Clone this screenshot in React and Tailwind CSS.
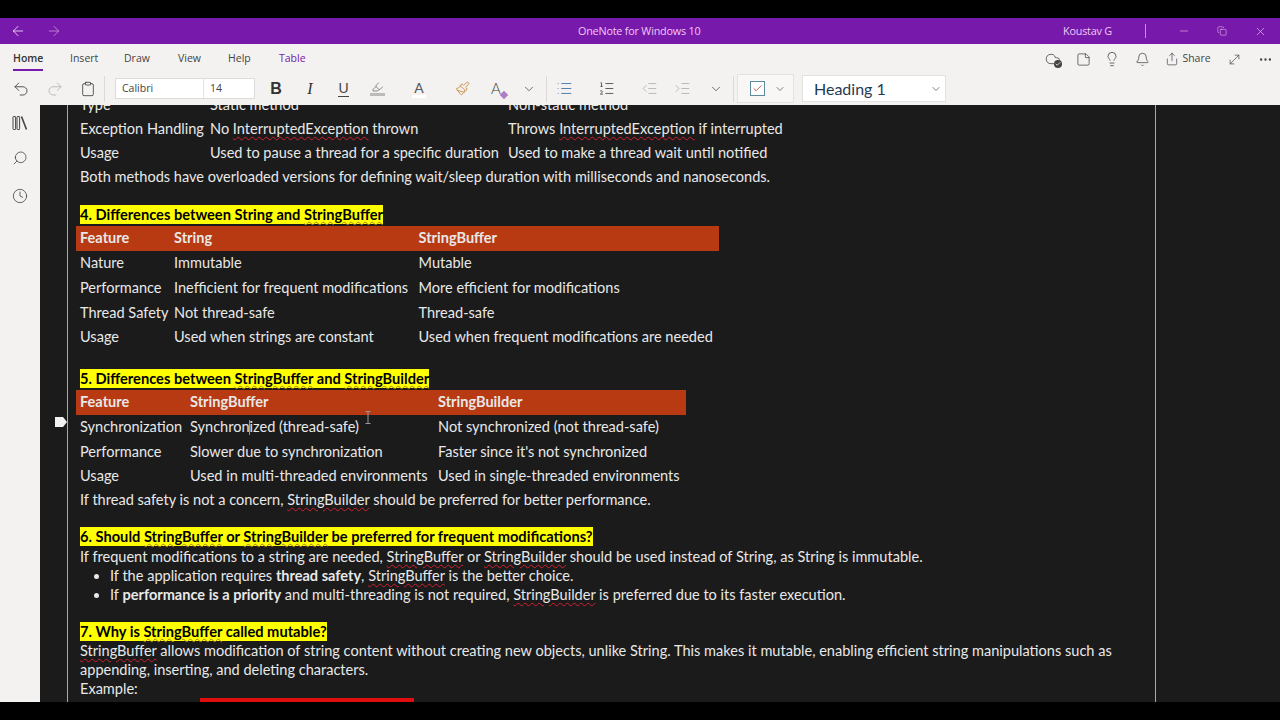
import React from 'react';
import {
  Undo2, Redo2, Clipboard, Highlighter, Paintbrush, ChevronDown, List, ListOrdered, IndentDecrease, IndentIncrease,
  Search, Clock, StickyNote, Lightbulb, Bell, Share, MoveDiagonal, Ellipsis, ArrowLeft, ArrowRight, Minus, X, Copy, Check, Cloud,
} from 'lucide-react';

function Sq({ children, warm }) {
  return <span className={warm ? 'underline decoration-wavy decoration-1 decoration-[#a8801a] underline-offset-1' : 'underline decoration-wavy decoration-1 decoration-[#d02030] underline-offset-2'}>{children}</span>;
}

function Line({ children, className = '' }) {
  return <div className={`h-[19px] leading-[19px] whitespace-pre ${className}`}>{children}</div>;
}

function Heading({ children, className = '' }) {
  return (
    <div className={`h-[19px] leading-[19px] ${className}`}>
      <span className="inline-block h-[19px] bg-[#ffff00] text-[14.65px] font-bold text-black">{children}</span>
    </div>
  );
}

function TableRow({ cols, cells, head, className = '' }) {
  return (
    <div className={`flex h-[24.7px] items-center whitespace-pre ${head ? 'bg-[#b83a12] font-bold -ml-[4px] pl-[4px]' : ''} ${className}`}>
      {cells.map((c, i) => (
        <div key={i} className={cols[i]}>{c}</div>
      ))}
    </div>
  );
}

function Tool({ w, children }) {
  return <div className={`flex h-[29px] items-center justify-center ${w}`}>{children}</div>;
}

function Sep() {
  return <div className="h-[26px] w-px bg-[#dcdad8]" />;
}

const cols3 = ['w-[130px]', 'w-[298px]', 'w-[400px]'];
const cols4 = ['w-[94px]', 'w-[244.5px]', 'w-[300px]'];
const cols5 = ['w-[110px]', 'w-[248px]', 'w-[244px]'];

export default function App() {
  return (
    <div className="flex h-[720px] w-[1280px] flex-col overflow-hidden bg-black font-['Lato',sans-serif]">
      <div className="h-[18px] shrink-0 bg-black" />

      {/* title bar */}
      <div className="flex h-[26px] shrink-0 items-center bg-[#7719aa] text-[#f0c8f4]">
        <div className="flex w-[72px] items-center">
          <div className="flex w-[36px] justify-center"><ArrowLeft size={16} strokeWidth={1.3} className="text-[#f4dcf8]" /></div>
          <div className="flex w-[36px] justify-center"><ArrowRight size={16} strokeWidth={1.3} className="text-[#c98ade]" /></div>
        </div>
        <div className="w-[991px] pl-[506px] text-[10.8px] font-['Open_Sans',sans-serif] tracking-[-0.2px]">OneNote for Windows 10</div>
        <div className="w-[82px] text-[10.8px] font-['Open_Sans',sans-serif] tracking-[-0.2px]">Koustav G</div>
        <div className="h-[14px] w-px bg-[#c58fe0]" />
        <div className="ml-[19px] flex items-center">
          <div className="flex w-[38px] justify-center"><Minus size={12} strokeWidth={1.2} /></div>
          <div className="flex w-[38px] justify-center"><Copy size={10} strokeWidth={1.3} /></div>
          <div className="flex w-[38px] justify-center"><X size={13} strokeWidth={1.2} /></div>
        </div>
      </div>

      {/* ribbon */}
      <div className="h-[61px] shrink-0 bg-[#f3f2f1] text-[#444]">
        <div className="flex h-[30px] items-start pt-[7px] text-[10.5px] font-['Open_Sans',sans-serif]">
          <div className="ml-[13px] w-[57px]">
            <div className="h-[15px] leading-[15px] font-semibold text-[#333]">Home</div>
            <div className="mt-[3px] h-[2px] w-[30px] bg-[#7719aa]" />
          </div>
          <div className="w-[54px] leading-[15px]">Insert</div>
          <div className="w-[54px] leading-[15px]">Draw</div>
          <div className="w-[50px] leading-[15px]">View</div>
          <div className="w-[51px] leading-[15px]">Help</div>
          <div className="leading-[15px] text-[#7719aa]">Table</div>
          <div className="ml-auto flex items-center text-[#444]">
            <div className="relative flex w-[32px] justify-center">
              <Cloud size={16} strokeWidth={1.2} />
              <span className="absolute bottom-[-1px] right-[7px] flex h-[8px] w-[8px] items-center justify-center rounded-full bg-[#444]"><Check size={6} strokeWidth={3} className="text-white" /></span>
            </div>
            <div className="flex w-[28px] justify-center"><StickyNote size={15} strokeWidth={1.2} /></div>
            <div className="flex w-[30px] justify-center"><Lightbulb size={16} strokeWidth={1.2} /></div>
            <div className="flex w-[30px] justify-center"><Bell size={15} strokeWidth={1.2} /></div>
            <div className="flex w-[62px] items-center justify-center gap-[3px]"><Share size={14} strokeWidth={1.2} /><span>Share</span></div>
            <div className="flex w-[31px] justify-center"><MoveDiagonal size={15} strokeWidth={1.1} /></div>
            <div className="flex w-[30px] justify-center"><Ellipsis size={15} strokeWidth={1.8} /></div>
          </div>
        </div>
        <div className="flex h-[29px] items-center pl-[4px]">
          <Tool w="w-[34px]"><Undo2 size={18} strokeWidth={1.2} className="text-[#444]" /></Tool>
          <Tool w="w-[34px]"><Redo2 size={18} strokeWidth={1.2} className="text-[#b5b5b5]" /></Tool>
          <Tool w="w-[32px]"><Clipboard size={16} strokeWidth={1.3} className="text-[#444]" /></Tool>
          <Sep />
          <div className="ml-[10px] flex h-[21px] w-[140px] border border-[#dedcda] bg-white text-[10.5px] leading-[19px] text-[#444] font-['Open_Sans',sans-serif]">
            <div className="w-[88px] border-r border-[#e4e2e0] pl-[6px]">Calibri</div>
            <div className="pl-[6px]">14</div>
          </div>
          <div className="ml-[4px] flex items-center">
            <Tool w="w-[34px]"><span className="font-['Liberation_Sans',sans-serif] text-[16px] font-bold text-[#333]">B</span></Tool>
            <Tool w="w-[34px]"><span className="font-['Liberation_Serif',serif] text-[16px] italic text-[#333]">I</span></Tool>
            <Tool w="w-[33px]"><span className="border-b border-[#444] font-['Liberation_Sans',sans-serif] text-[14px] leading-[15px] text-[#444]">U</span></Tool>
            <Tool w="w-[34px]"><Highlighter size={15} strokeWidth={1.2} className="border-b-[3px] border-[#bbb] text-[#444]" /></Tool>
            <Tool w="w-[50px]"><span className="border-b-[3px] border-white px-[2px] text-[14px] leading-[15px] text-[#555]">A</span></Tool>
            <Tool w="w-[36px]"><Paintbrush size={15} strokeWidth={1.4} className="text-[#c8893a]" /></Tool>
            <Tool w="w-[32px]">
              <span className="relative text-[15px] font-light text-[#444]">A<span className="absolute bottom-[2px] right-[-6px] h-[6px] w-[6px] rotate-45 bg-[#b07cc6]" /></span>
            </Tool>
            <Tool w="w-[34px]"><ChevronDown size={14} strokeWidth={1.3} className="text-[#444]" /></Tool>
          </div>
          <Sep />
          <Tool w="w-[35px]"><List size={17} strokeWidth={1.2} className="text-[#3a6ea5]" /></Tool>
          <Tool w="w-[49px]"><ListOrdered size={17} strokeWidth={1.2} className="text-[#444]" /></Tool>
          <Tool w="w-[36px]"><IndentDecrease size={17} strokeWidth={1.1} className="text-[#aaa]" /></Tool>
          <Tool w="w-[31px]"><IndentIncrease size={17} strokeWidth={1.1} className="text-[#aaa]" /></Tool>
          <Tool w="w-[35px]"><ChevronDown size={14} strokeWidth={1.3} className="text-[#444]" /></Tool>
          <Sep />
          <div className="ml-[3px] flex h-[29px] w-[57px] items-center border border-[#e4e2e0] bg-[#f8f7f6]">
            <div className="ml-[12px] flex h-[15px] w-[15px] items-center justify-center border border-[#5f8c9c] bg-white"><Check size={11} strokeWidth={1.6} className="text-[#b3202c]" /></div>
            <ChevronDown size={12} strokeWidth={1.4} className="ml-[9px] text-[#444]" />
          </div>
          <div className="ml-[8px] flex h-[27px] w-[144px] items-center justify-between border border-[#e4e2e0] bg-white pl-[11px] pr-[3px] text-[16px] text-[#1f3b53]">
            <span>Heading 1</span>
            <ChevronDown size={12} strokeWidth={1.4} className="text-[#444]" />
          </div>
        </div>
      </div>

      <div className="flex min-h-0 flex-1">
        {/* left rail */}
        <div className="flex w-[40px] shrink-0 flex-col items-center gap-[19px] bg-[#f3f2f1] pt-[10px] text-[#444]">
          <svg width="16" height="16" viewBox="0 0 16 16" fill="none" stroke="currentColor" strokeWidth="1">
            <rect x="1" y="1.5" width="2.6" height="13" rx="0.6" />
            <rect x="5" y="1.5" width="2.6" height="13" rx="0.6" />
            <path d="M9.5 1.5l5 13" strokeWidth="1.6" />
          </svg>
          <Search size={16} strokeWidth={1.2} className="-scale-x-100" />
          <Clock size={16} strokeWidth={1.2} className="mt-[3px]" />
        </div>

        {/* page */}
        <div className="relative min-w-0 flex-1 overflow-hidden bg-[#1b1b1b] text-[14.55px] text-[#e8e8e8]">
          <div className="ml-[27px] h-[640px] w-[1089px] border-x border-[#a8a8a8] pl-[12px] -mt-[12px]">
            <TableRow cols={cols3} cells={['Type', 'Static method', 'Non-static method']} className="!h-[24px]" />
            <TableRow cols={cols3} cells={['Exception Handling', <>No <Sq>InterruptedException</Sq> thrown</>, <>Throws <Sq>InterruptedException</Sq> if interrupted</>]} className="!h-[24px]" />
            <TableRow cols={cols3} cells={['Usage', 'Used to pause a thread for a specific duration', 'Used to make a thread wait until notified']} className="!h-[24px]" />
            <TableRow cols={['w-[800px]']} cells={['Both methods have overloaded versions for defining wait/sleep duration with milliseconds and nanoseconds.']} className="!h-[24px]" />

            <Heading className="mt-[16px]">4. Differences between String and <Sq warm>StringBuffer</Sq></Heading>
            <div className="mt-[2px] w-[639px]">
              <TableRow head cols={cols4} cells={['Feature', 'String', 'StringBuffer']} />
            </div>
            <TableRow cols={cols4} cells={['Nature', 'Immutable', 'Mutable']} />
            <TableRow cols={cols4} cells={['Performance', 'Inefficient for frequent modifications', 'More efficient for modifications']} />
            <TableRow cols={cols4} cells={['Thread Safety', 'Not thread-safe', 'Thread-safe']} />
            <TableRow cols={cols4} cells={['Usage', 'Used when strings are constant', 'Used when frequent modifications are needed']} />

            <Heading className="mt-[20px]">5. Differences between <Sq warm>StringBuffer</Sq> and <Sq warm>StringBuilder</Sq></Heading>
            <div className="mt-[1.5px] w-[606px]">
              <TableRow head cols={cols5} cells={['Feature', 'StringBuffer', 'StringBuilder']} />
            </div>
            <TableRow cols={cols5} cells={['Synchronization', 'Synchronized (thread-safe)', 'Not synchronized (not thread-safe)']} />
            <TableRow cols={cols5} cells={['Performance', 'Slower due to synchronization', "Faster since it's not synchronized"]} />
            <TableRow cols={cols5} cells={['Usage', 'Used in multi-threaded environments', 'Used in single-threaded environments']} />
            <Line className="mt-[1.2px]">If thread safety is not a concern, <Sq>StringBuilder</Sq> should be preferred for better performance.</Line>

            <Heading className="mt-[18px]">6. Should <Sq warm>StringBuffer</Sq> or <Sq warm>StringBuilder</Sq> be preferred for frequent modifications?</Heading>
            <Line className="mt-[1px]">If frequent modifications to a string are needed, <Sq>StringBuffer</Sq> or <Sq>StringBuilder</Sq> should be used instead of String, as String is immutable.</Line>
            <ul className="list-disc pl-[30px]">
              <li className="h-[19px] leading-[19px]">If the application requires <b>thread safety</b>, <Sq>StringBuffer</Sq> is the better choice.</li>
              <li className="h-[19px] leading-[19px]">If <b>performance is a priority</b> and multi-threading is not required, <Sq>StringBuilder</Sq> is preferred due to its faster execution.</li>
            </ul>

            <Heading className="mt-[18px]">7. Why is <Sq warm>StringBuffer</Sq> called mutable?</Heading>
            <Line><Sq>StringBuffer</Sq> allows modification of string content without creating new objects, unlike String. This makes it mutable, enabling efficient string manipulations such as</Line>
            <Line>appending, inserting, and deleting characters.</Line>
            <Line>Example:</Line>
            <div className="ml-[120px] h-[19px] w-[214px] bg-[#e00f0f] pl-[17px] pt-[2px] text-[13.8px] font-bold leading-[15px] whitespace-pre">public class StringBuffer Example {'{'}</div>
          </div>

          {/* note container handle and cursor */}
          <svg className="absolute left-[15px] top-[312px]" width="12" height="10" viewBox="0 0 12 10"><path d="M0 0h8l4 5-4 5H0z" fill="#f2f2f2" /></svg>
          <svg className="absolute left-[325px] top-[306px]" width="6" height="13" viewBox="0 0 6 13" fill="none" stroke="#999" strokeWidth="1"><path d="M0.5 0.5h5M3 0.5v12M0.5 12.5h5" /></svg>
          <div className="absolute left-[209px] top-[315px] h-[15px] w-px bg-[#999]" />
        </div>
      </div>

      <div className="h-[18px] shrink-0 bg-black" />
    </div>
  );
}
